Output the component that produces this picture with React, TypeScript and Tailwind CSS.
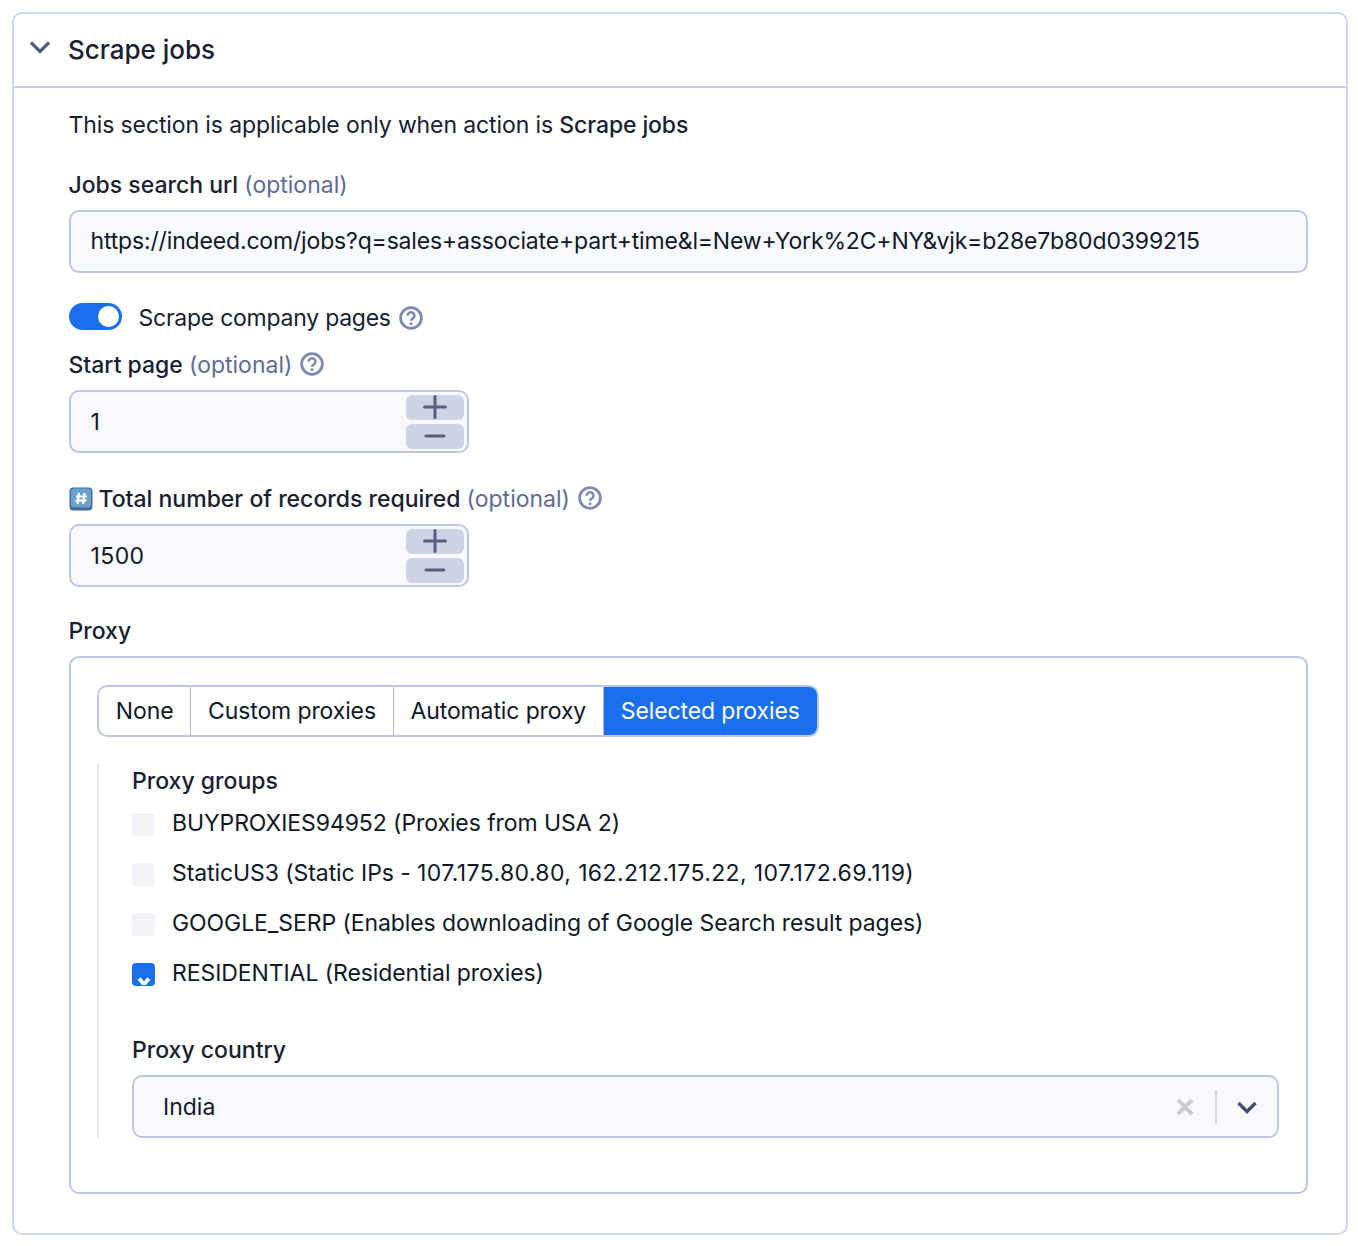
import React from "react";

const inter = "font-['Inter',sans-serif]";

function Help() {
  return (
    <svg width="24" height="24" viewBox="0 0 24 24" fill="none" className="shrink-0">
      <circle cx="12" cy="12" r="10.400" stroke="#7f8ab0" strokeWidth="2.800" />
      <path d="M8.600 9.700a3.400 3.400 0 1 1 5.200 2.800c-1.100.7-1.800 1.100-1.800 2.300" stroke="#7f8ab0" strokeWidth="2.500" />
      <circle cx="12" cy="17.800" r="1.500" fill="#7f8ab0" />
    </svg>
  );
}

function Optional() {
  return <span className="font-normal text-[#5f6b94]">(optional)</span>;
}

function NumberField({ value }: { value: string }) {
  return (
    <div className="flex h-[63px] w-[400px] items-center justify-between rounded-[10px] border-2 border-[#bfc6e3] bg-[#f8f9fd] pl-[20px] pr-[3px] text-[23px] tracking-[0.4px] text-[#101828]">
      <span className="mt-[1px]">{value}</span>
      <div className="flex flex-col gap-[4px]">
        <div className="flex h-[25px] w-[58px] items-center justify-center rounded-[6px] bg-[#ced3e6]">
          <svg width="24" height="24" viewBox="0 0 24 24"><path d="M12 1.500v21M1.500 12h21" stroke="#565f7f" strokeWidth="3" strokeLinecap="round" /></svg>
        </div>
        <div className="flex h-[25px] w-[58px] items-center justify-center rounded-[6px] bg-[#ced3e6]">
          <svg width="24" height="24" viewBox="0 0 24 24"><path d="M3 12h18" stroke="#565f7f" strokeWidth="3" strokeLinecap="round" /></svg>
        </div>
      </div>
    </div>
  );
}

function Check({ children, checked, mb }: { children: React.ReactNode; checked?: boolean; mb?: boolean }) {
  return (
    <div className={`flex h-[24px] items-center gap-[17px] ${mb ? "mb-[26px]" : ""}`}>
      {checked ? (
        <div className="relative mt-[3px] h-[23px] w-[23px] shrink-0 overflow-hidden rounded-[4px] bg-[#1a6fee]">
          <svg width="23" height="23" viewBox="0 0 23 23" className="absolute left-0 top-0">
            <path d="M5.500 16.500L9 14.500L12 18.500L15 14.500L18.500 16.500L14 22H10Z" fill="#ffffff" />
          </svg>
        </div>
      ) : (
        <div className="mt-[3px] h-[23px] w-[23px] shrink-0 rounded-[4px] bg-[#f2f3f9]" />
      )}
      <span className="text-[23px] tracking-[-0.08px] text-[#101828]">{children}</span>
    </div>
  );
}

function Tab({ label, active, last }: { label: string; active?: boolean; last?: boolean }) {
  return (
    <div
      className={`flex h-full items-center px-[16.8px] text-[23px] tracking-[-0.12px] ${
        active ? "bg-[#1a6fee] text-white" : "text-[#101828]"
      } ${last ? "" : "border-r border-[#aeb7da]"}`}
    >
      {label}
    </div>
  );
}

export default function App() {
  return (
    <div className={`${inter} bg-white p-[12px] leading-none`}>
      <div className="h-[1223px] w-[1336px] rounded-[10px] border-2 border-[#d0d6ec]">
        <div className="flex h-[74px] items-center border-b-2 border-[#c6cce6] pl-[13px]">
          <svg width="26" height="26" viewBox="0 0 26 26" fill="none" className="-mt-[6px] mr-[15px]">
            <path d="M4 8.500l9 9 9-9" stroke="#535c7d" strokeWidth="3.200" />
          </svg>
          <span className="text-[26px] font-medium text-[#182032]">Scrape jobs</span>
        </div>

        <div className="pl-[54.5px] pr-[38px]">
          <p className="mt-[26px] text-[23px] tracking-[-0.11px] text-[#182032]">
            This section is applicable only when action is <span className="font-medium">Scrape jobs</span>
          </p>

          <label className="mt-[37px] block text-[23px] font-medium text-[#182032]">
            Jobs search url <Optional />
          </label>
          <div className="mt-[13px] flex h-[63px] items-center rounded-[10px] border-2 border-[#bfc6e3] bg-[#f8f9fd] pl-[20px] text-[23px] tracking-[-0.16px] text-[#101828]">
            https://indeed.com/jobs?q=sales+associate+part+time&l=New+York%2C+NY&vjk=b28e7b80d0399215
          </div>

          <div className="mt-[29px] flex h-[29px] items-center">
            <div className="flex h-[27px] w-[53px] items-center justify-end rounded-full bg-[#1a6fee] pr-[3px]">
              <div className="h-[21px] w-[21px] rounded-full bg-white" />
            </div>
            <span className="ml-[17px] mt-[3px] text-[23px] tracking-[-0.25px] text-[#182032]">Scrape company pages</span>
            <span className="ml-[8px] mt-[2px]"><Help /></span>
          </div>

          <div className="mt-[23px] flex items-center gap-[8px]">
            <label className="text-[23px] font-medium text-[#182032]">
              Start page <Optional />
            </label>
            <span className="-mt-[3px]"><Help /></span>
          </div>
          <div className="mt-[13px]"><NumberField value="1" /></div>

          <div className="mt-[34px] flex items-center gap-[8px]">
            <label className="flex items-center text-[23px] font-medium text-[#182032]">
              <svg width="24" height="24" viewBox="0 0 24 24" className="mr-[6px]">
                <rect x="0.500" y="0.500" width="23" height="23" rx="4" fill="#3f6f99" />
                <rect x="2" y="1.500" width="20" height="19" rx="3" fill="#6aa2cf" />
                <path d="M10 6l-1.500 11M15.500 6L14 17M7 9.500h11M6.500 13.500h11" stroke="#ffffff" strokeWidth="2.200" />
              </svg>
              <span>Total number of records required&nbsp;<Optional /></span>
            </label>
            <span className="-mt-[3px]"><Help /></span>
          </div>
          <div className="mt-[13px]"><NumberField value="1500" /></div>

          <label className="mt-[33px] block text-[23px] font-medium text-[#182032]">Proxy</label>

          <div className="mt-[13px] h-[538px] rounded-[10px] border-2 border-[#bfc6e3] pl-[26.5px] pr-[27px] pt-[27px]">
            <div className="flex h-[52px] w-fit overflow-hidden rounded-[10px] border-2 border-[#bfc6e3]">
              <Tab label="None" />
              <Tab label="Custom proxies" />
              <Tab label="Automatic proxy" />
              <Tab label="Selected proxies" active last />
            </div>

            <div className="mt-[26px] h-[375px] border-l-2 border-[#e3e6f4] pl-[33px]">
              <div className="pt-[7px] text-[23px] font-medium text-[#182032]">Proxy groups</div>
              <div className="mt-[18px]">
                <Check mb>BUYPROXIES94952 (Proxies from USA 2)</Check>
                <Check mb>StaticUS3 (Static IPs - <span className="tracking-[0.38px]">107.175.80.80, 162.212.175.22, 107.172.69.119</span>)</Check>
                <Check mb>GOOGLE_SERP (Enables downloading of Google Search result pages)</Check>
                <Check checked>RESIDENTIAL (Residential proxies)</Check>
              </div>
              <div className="mt-[54px] text-[23px] font-medium text-[#182032]">Proxy country</div>
              <div className="mt-[13px] flex h-[63px] items-center rounded-[10px] border-2 border-[#bfc6e3] bg-[#f8f9fd] pl-[29px] text-[23px] text-[#101828]">
                <span className="mt-[2px] flex-1">India</span>
                <svg width="20" height="20" viewBox="0 0 20 20" className="mr-[20px]">
                  <path d="M3 3l14 14M17 3L3 17" stroke="#cccccc" strokeWidth="4" />
                </svg>
                <div className="h-[34px] w-[2px] bg-[#d4d4d4]" />
                <svg width="24" height="24" viewBox="0 0 24 24" fill="none" className="ml-[18px] mr-[18px]">
                  <path d="M3.500 8l8.500 8.500L20.500 8" stroke="#454e70" strokeWidth="3.400" />
                </svg>
              </div>
            </div>
          </div>
        </div>
      </div>
    </div>
  );
}
